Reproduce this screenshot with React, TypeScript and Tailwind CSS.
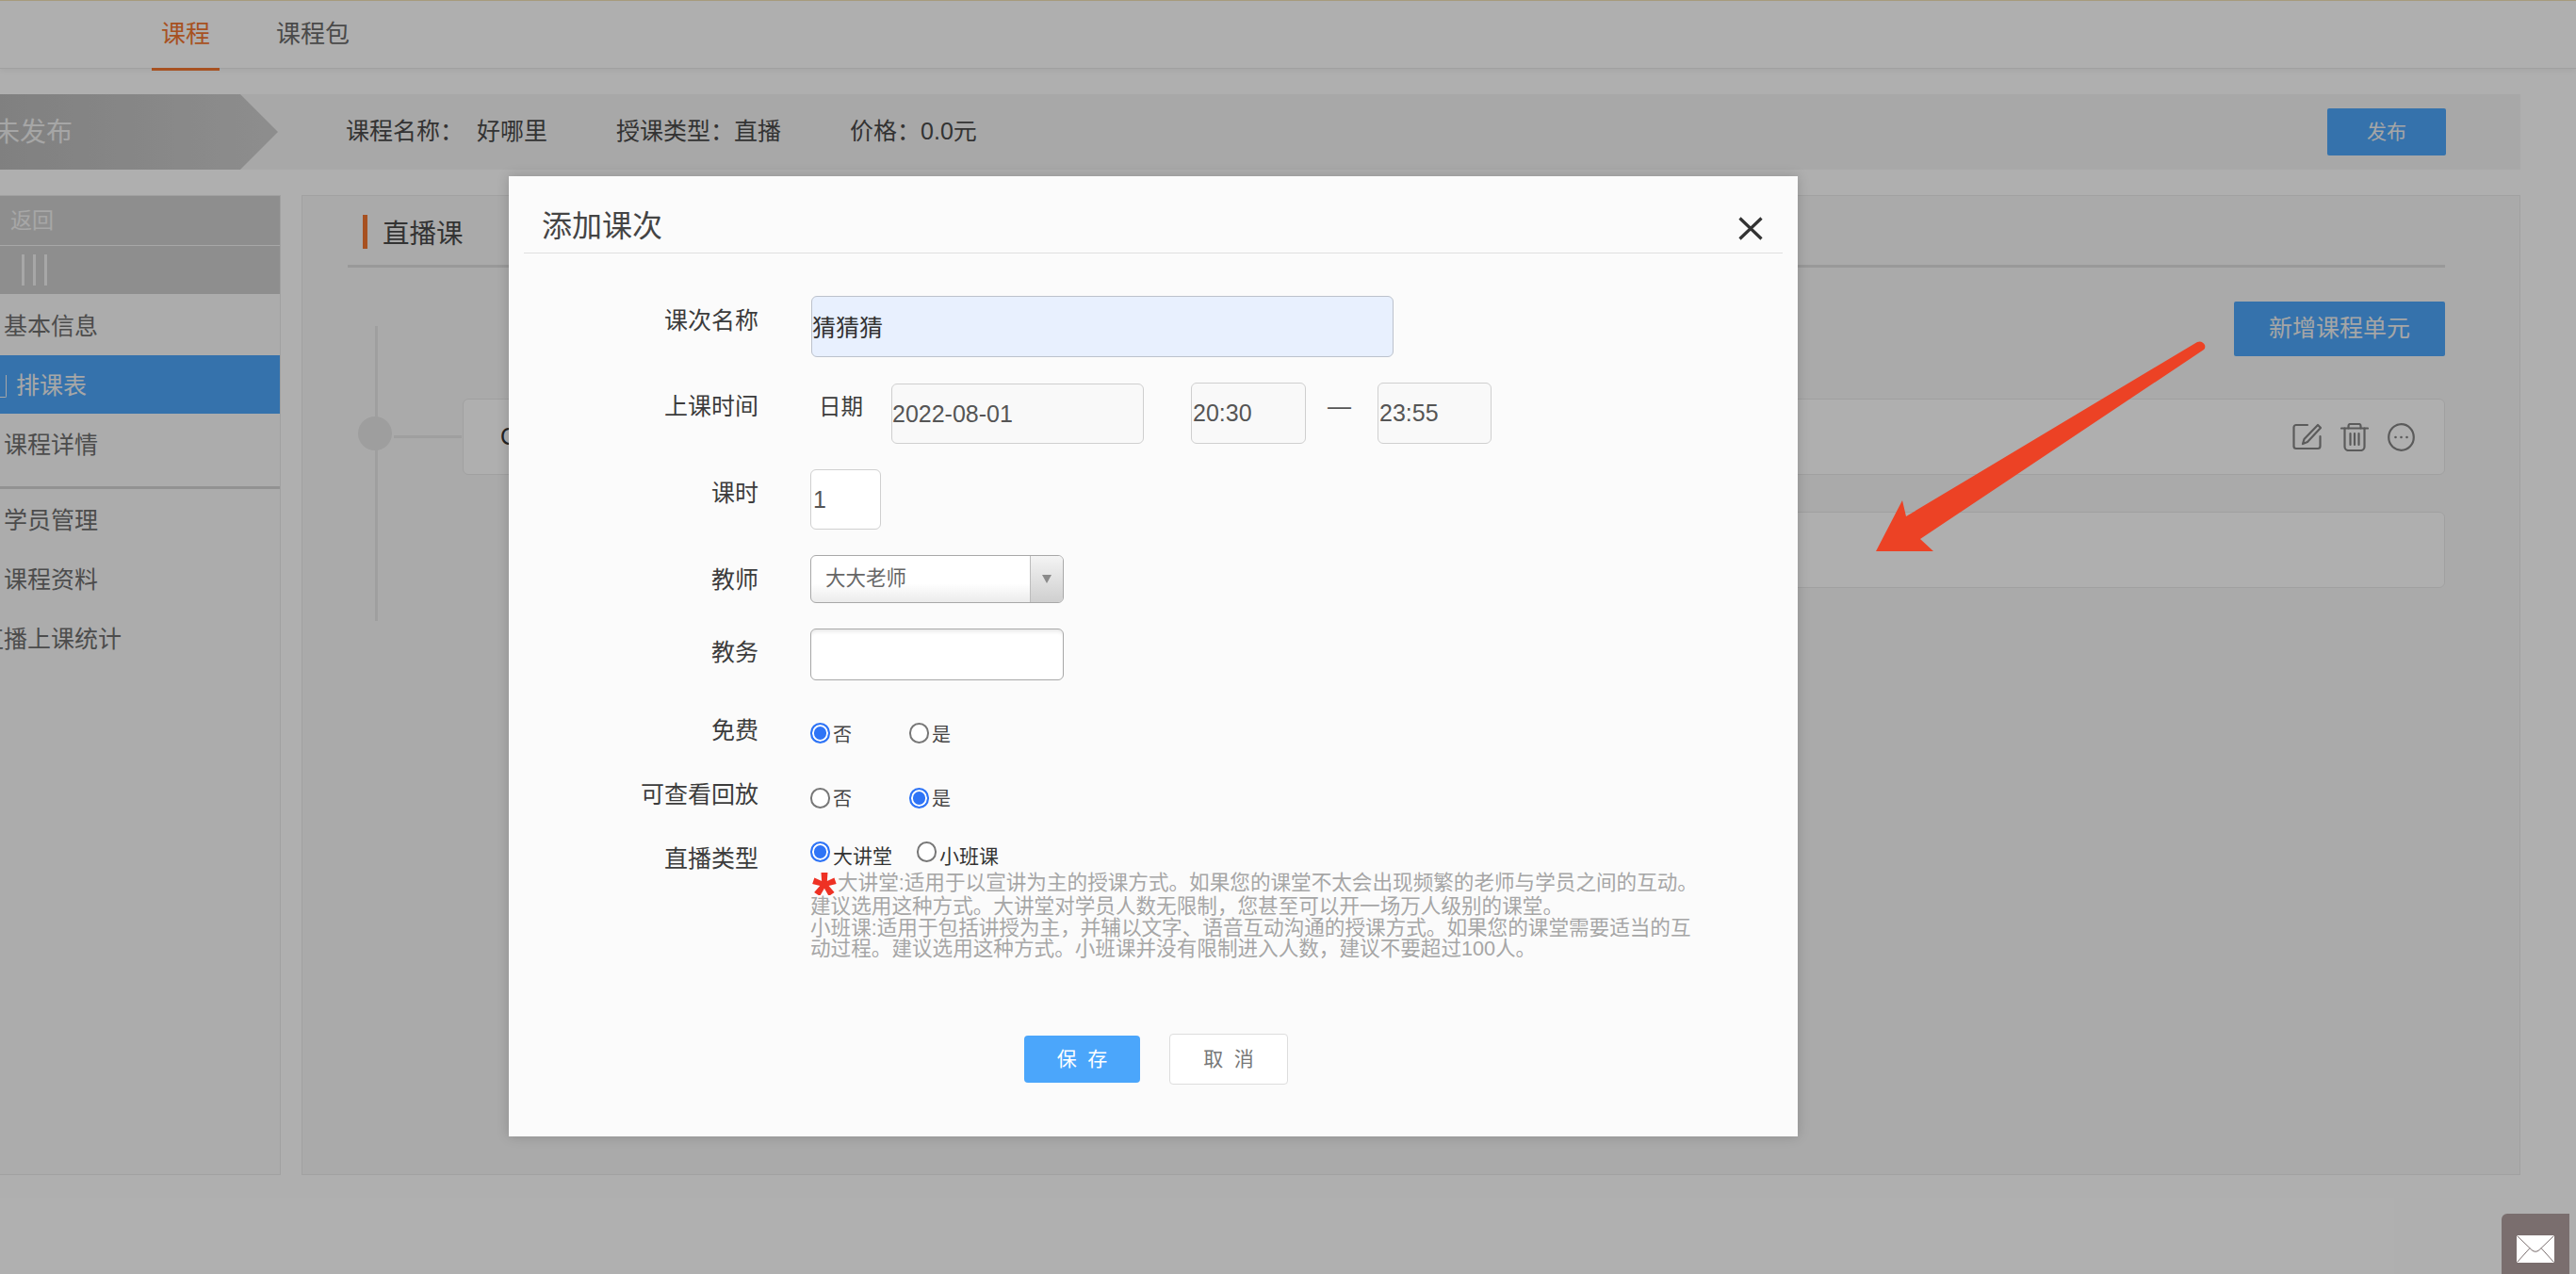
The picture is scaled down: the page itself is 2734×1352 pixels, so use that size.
import React from 'react';

const Radio = ({ name, checked }: { name: string; checked?: boolean }) => (
  <input
    type="radio"
    name={name}
    defaultChecked={checked}
    className="m-0 h-[22px] w-[21px] shrink-0 appearance-none rounded-full border-2 border-[#777777] bg-white checked:border-[#2f74f6] checked:bg-[#2f74f6] checked:shadow-[inset_0_0_0_2px_white]"
  />
);

const App = () => {
  return (
    <div className="relative h-screen w-full overflow-hidden bg-[#fbfbfb] font-['Liberation_Sans','Noto_Sans_CJK_SC',sans-serif] text-[25px] text-[#4a4a4a]">
      {/* top tabs */}
      <div className="flex h-[73px] border-t border-b border-t-[#f0dfb4] border-b-[#e6e6e6] pl-[161px] text-[26px] shadow-[0_2px_6px_rgba(0,0,0,0.06)]">
        <div className="flex h-[74px] w-[72px] items-center justify-center border-b-[3px] border-[#f07530] text-[#f07530]">课程</div>
        <div className="ml-[60px] flex h-[71px] w-[78px] items-center justify-center text-[#6a6a6a]">课程包</div>
      </div>

      {/* status bar */}
      <div className="mt-[27px] flex h-[80px] w-[2675px] items-center bg-[#f1f1f1]">
        <div className="flex h-full w-[295px] items-center bg-gradient-to-r from-[#b8b8b8] to-[#cbcbcb] pt-[2px] [clip-path:polygon(0_0,255px_0,295px_50%,255px_100%,0_100%)]">
          <span className="-ml-[7px] text-[28px] whitespace-nowrap text-[#eeeeee]">未发布</span>
        </div>
        <span className="ml-[72px] w-[139px] whitespace-nowrap">课程名称：</span>
        <span className="whitespace-nowrap">好哪里</span>
        <span className="ml-[73px] whitespace-nowrap">授课类型：直播</span>
        <span className="ml-[73px] whitespace-nowrap">价格：0.0元</span>
        <button className="mr-[79px] ml-auto flex h-[50px] w-[126px] items-center justify-center rounded-[2px] bg-[#4ca4f6] text-[21px] text-[#eeeeee]">发布</button>
      </div>

      <div className="mt-[27px] flex">
        {/* side menu */}
        <div className="h-[1040px] w-[298px] border-t border-r border-b border-[#e7e7e7] bg-[#f6f6f6] text-[#6e6e6e]">
          <div className="flex h-[52px] items-center bg-[#cccccc] pl-[11px] text-[23px] text-[#efefef]">返回</div>
          <div className="h-px bg-[#f0f0f0]" />
          <div className="flex h-[51px] items-center gap-[9px] bg-[#cccccc] pl-[23px]">
            <span className="h-[33px] w-[3px] bg-[#efefef]" />
            <span className="h-[33px] w-[3px] bg-[#efefef]" />
            <span className="h-[33px] w-[3px] bg-[#efefef]" />
          </div>
          <div className="flex h-[65px] items-center pt-[5px] pl-[4px]">基本信息</div>
          <div className="flex h-[62px] items-center bg-[#4ca4f6] pt-[4px] text-[#f0f0f0]">
            <span className="h-[24px] w-[7px] rounded-br-[2px] border-r border-b border-[#f0f0f0]" />
            <span className="ml-[10px]">排课表</span>
          </div>
          <div className="flex h-[68px] items-center pl-[4px]">课程详情</div>
          <div className="mt-[9px] h-[3px] bg-[#d1d1d1]" />
          <div className="mt-[2px] flex h-[63px] items-center pl-[4px]">学员管理</div>
          <div className="flex h-[63px] items-center pl-[4px]">课程资料</div>
          <div className="-ml-[21px] flex h-[63px] items-center whitespace-nowrap">直播上课统计</div>
        </div>

        {/* main panel */}
        <div className="relative ml-[22px] h-[1040px] w-[2355px] border border-[#e7e7e7] bg-[#f4f4f4]">
          <div className="ml-[48px] flex h-[76px] w-[2226px] items-start border-b-[3px] border-[#dbdbdb] pt-[20px] pl-[16px]">
            <span className="h-[36px] w-[5px] bg-[#f07530]" />
            <span className="ml-[16px] text-[28.5px] leading-[40px] text-[#4a4a4a]">直播课</span>
          </div>
          <div className="mt-[36px] flex justify-end pr-[79px]">
            <button className="flex h-[58px] w-[224px] items-center justify-center rounded-[2px] bg-[#4ca4f6] text-[#eeeeee]">新增课程单元</button>
          </div>

          <span className="absolute top-[138px] left-[77px] h-[313px] w-[3px] bg-[#e4e4e4]" />
          <div className="mt-[45px] ml-[59px] flex items-center pr-[79px]">
            <span className="relative -mt-[7px] h-[36px] w-[36px] rounded-full bg-[#e2e2e2]" />
            <span className="ml-[2px] h-[3px] w-[72px] bg-[#e4e4e4]" />
            <div className="ml-px flex h-[81px] flex-1 items-center rounded-[6px] border border-[#e6e6e6] bg-[#fbfbfb] pr-[31px] pl-[39px]">
              <span className="text-[#333333]">C</span>
              <div className="ml-auto flex items-center gap-[20px]">
                <svg width="31" height="29" viewBox="0 0 31 29" fill="none" stroke="#838383" strokeWidth="2.2" strokeLinecap="round" strokeLinejoin="round">
                  <path d="M16 2H4a2.500 2.500 0 0 0-2.500 2.500v20A2.500 2.500 0 0 0 4 27h23a2.500 2.500 0 0 0 2.500-2.500V14" />
                  <path d="M27 2l3 3-14 15-5 2 1.500-5z" />
                </svg>
                <svg width="30" height="30" viewBox="0 0 30 30" fill="none" stroke="#838383" strokeWidth="2.2" strokeLinecap="round" strokeLinejoin="round">
                  <path d="M1 5.500h28" />
                  <path d="M8.500 5.500V3a2 2 0 0 1 2-2h9a2 2 0 0 1 2 2v2.500" />
                  <path d="M4.500 5.500V25a4 4 0 0 0 4 4h13a4 4 0 0 0 4-4V5.500" />
                  <path d="M10.500 11v12M15 11v12M19.500 11v12" />
                </svg>
                <svg width="29" height="30" viewBox="0 0 29 30" fill="none" stroke="#838383" strokeWidth="2.2">
                  <ellipse cx="14.500" cy="15" rx="13.300" ry="13.800" />
                  <circle cx="8.500" cy="15" r="1.300" fill="#838383" stroke="none" />
                  <circle cx="14.500" cy="15" r="1.300" fill="#838383" stroke="none" />
                  <circle cx="20.500" cy="15" r="1.300" fill="#838383" stroke="none" />
                </svg>
              </div>
            </div>
          </div>
          <div className="mt-[39px] mr-[79px] ml-[280px] h-[81px] rounded-[6px] border border-[#e6e6e6] bg-[#fbfbfb]" />
        </div>
      </div>

      {/* dim layer */}
      <div className="absolute inset-0 bg-black/30" />

      {/* dialog */}
      <div className="absolute top-[187px] left-[540px] h-[1019px] w-[1368px] bg-[#fbfbfb] text-[#3c3c3c] shadow-[0_0_12px_rgba(0,0,0,0.18)]">
        <div className="mx-[16px] flex h-[82px] items-start justify-between border-b border-[#dfdfdf] pt-[33px] pr-[21px] pl-[19px]">
          <span className="text-[32px] leading-[40px] text-[#444444]">添加课次</span>
          <svg className="mt-[10px]" width="26" height="25" viewBox="0 0 26 25" fill="none" stroke="#333333" strokeWidth="3.200">
            <path d="M1.500 1.500l23 22M24.500 1.500l-23 22" />
          </svg>
        </div>

        <div className="mt-[45px] flex">
          <label className="w-[265px] pt-[11px] text-right leading-[30px]">课次名称</label>
          <input defaultValue="猜猜猜" className="ml-[56px] h-[65px] w-[618px] rounded-[6px] border border-[#bcc2cc] bg-[#e8f0fe] pb-[2px] text-[#333333] outline-none" />
        </div>

        <div className="mt-[27px] flex">
          <label className="w-[265px] pt-[10px] text-right leading-[30px]">上课时间</label>
          <span className="mt-[11px] ml-[64px] w-[47px] text-[23.5px] leading-[30px] whitespace-nowrap">日期</span>
          <input defaultValue="2022-08-01" className="mt-[1px] ml-[30px] h-[64px] w-[268px] rounded-[6px] border border-[#cfcfcf] bg-[#f9f9f9] text-[#555555] outline-none" />
          <input defaultValue="20:30" className="ml-[50px] h-[65px] w-[122px] rounded-[6px] border border-[#cfcfcf] bg-[#f9f9f9] px-[1px] text-[#555555] outline-none" />
          <span className="mt-[10px] ml-[23px] w-[26px] leading-[30px] text-[#555555]">—</span>
          <input defaultValue="23:55" className="ml-[27px] h-[65px] w-[121px] rounded-[6px] border border-[#cfcfcf] bg-[#f9f9f9] px-[1px] text-[#555555] outline-none" />
        </div>

        <div className="mt-[27px] flex">
          <label className="w-[265px] pt-[10px] text-right leading-[30px]">课时</label>
          <input defaultValue="1" className="ml-[55px] h-[64px] w-[75px] rounded-[6px] border border-[#d0d0d0] bg-white px-[2px] text-[#555555] outline-none" />
        </div>

        <div className="mt-[27px] flex">
          <label className="w-[265px] pt-[11px] text-right leading-[30px]">教师</label>
          <div className="ml-[55px] flex h-[51px] w-[269px] items-center overflow-hidden rounded-[6px] border border-[#a8a8a8] bg-gradient-to-b from-white from-60% to-[#ebebeb] text-[21.5px] text-[#666666]">
            <span className="flex-1 pl-[15px]">大大老师</span>
            <span className="flex h-full w-[35px] items-center justify-center border-l border-[#bdbdbd] bg-gradient-to-b from-[#f4f4f4] to-[#cfcfcf]">
              <span className="h-0 w-0 border-x-[5px] border-t-[9px] border-x-transparent border-t-[#8a8a8a]" />
            </span>
          </div>
        </div>

        <div className="mt-[27px] flex">
          <label className="w-[265px] pt-[10px] text-right leading-[30px]">教务</label>
          <input className="ml-[55px] h-[55px] w-[269px] rounded-[6px] border border-[#a8a8a8] bg-white shadow-[inset_0_4px_4px_-2px_rgba(0,0,0,0.1)] outline-none" />
        </div>

        <div className="mt-[38px] flex">
          <label className="w-[265px] text-right leading-[30px]">免费</label>
          <div className="ml-[55px] flex h-[36px] items-center text-[20px] text-[#444444]">
            <Radio name="free" checked />
            <span className="mt-[4px] ml-[3px] w-[81px]">否</span>
            <Radio name="free" />
            <span className="mt-[4px] ml-[3px]">是</span>
          </div>
        </div>

        <div className="mt-[32px] flex">
          <label className="w-[265px] text-right leading-[30px] whitespace-nowrap">可查看回放</label>
          <div className="ml-[55px] flex h-[38px] items-center text-[20px] text-[#444444]">
            <Radio name="replay" />
            <span className="mt-[2px] ml-[3px] w-[81px]">否</span>
            <Radio name="replay" checked />
            <span className="mt-[2px] ml-[3px]">是</span>
          </div>
        </div>

        <div className="mt-[27px] flex">
          <label className="w-[265px] pt-[3px] text-right leading-[30px]">直播类型</label>
          <div className="ml-[55px] w-[960px]">
            <div className="flex items-start text-[21px] leading-[24px] text-[#333333]">
              <Radio name="live" checked />
              <span className="mt-[4px] ml-[3px]">大讲堂</span>
              <span className="ml-[26px] flex">
                <Radio name="live" />
              </span>
              <span className="mt-[4px] ml-[3px]">小班课</span>
            </div>
            <div className="mt-[3px] text-[21.6px] whitespace-nowrap text-[#a6a6a6]">
              <div className="flex h-[26px] items-start leading-[26px]">
                <span className="ml-[2px] h-[26px] w-[27px] overflow-hidden text-[66px] leading-[50px] font-bold text-[#ee3124]">*</span>
                <span>大讲堂:适用于以宣讲为主的授课方式。如果您的课堂不太会出现频繁的老师与学员之间的互动。</span>
              </div>
              <div className="leading-[24px]">建议选用这种方式。大讲堂对学员人数无限制，您甚至可以开一场万人级别的课堂。</div>
              <div className="leading-[22px]">小班课:适用于包括讲授为主，并辅以文字、语音互动沟通的授课方式。如果您的课堂需要适当的互</div>
              <div className="leading-[22px]">动过程。建议选用这种方式。小班课并没有限制进入人数，建议不要超过100人。</div>
            </div>
          </div>
        </div>

        <div className="mt-[79px] flex items-center pl-[547px]">
          <button className="flex h-[50px] w-[123px] items-center justify-center rounded-[4px] bg-[#4ba6fb] text-[21px] text-white">保&nbsp;&nbsp;存</button>
          <button className="ml-[31px] flex h-[54px] w-[126px] items-center justify-center rounded-[4px] border border-[#dddddd] bg-white text-[21px] text-[#777777]">取&nbsp;&nbsp;消</button>
        </div>
      </div>

      {/* red annotation arrow */}
      <svg className="absolute top-0 left-0" width="2734" height="1352" viewBox="0 0 2734 1352" fill="#ec4225">
        <path d="M2332 363Q2337 361 2340 366Q2341 369 2339 371L2038 572L2052 585L1991 585L2019 531L2023 548Z" />
      </svg>

      {/* mail button */}
      <div className="absolute right-[7px] bottom-0 flex h-[64px] w-[72px] items-start justify-center rounded-tl-[6px] bg-[#7a6e6e] pt-[23px]">
        <svg width="40" height="29" viewBox="0 0 40 29">
          <rect width="40" height="29" rx="1" fill="#ffffff" />
          <path d="M0.500 0.500L16 15.500Q20 19 24 15.500L39.500 0.500M0.500 28.500L14 13.500M39.500 28.500L26 13.500" fill="none" stroke="#7a6e6e" strokeWidth="1" />
        </svg>
      </div>
    </div>
  );
};

export default App;
